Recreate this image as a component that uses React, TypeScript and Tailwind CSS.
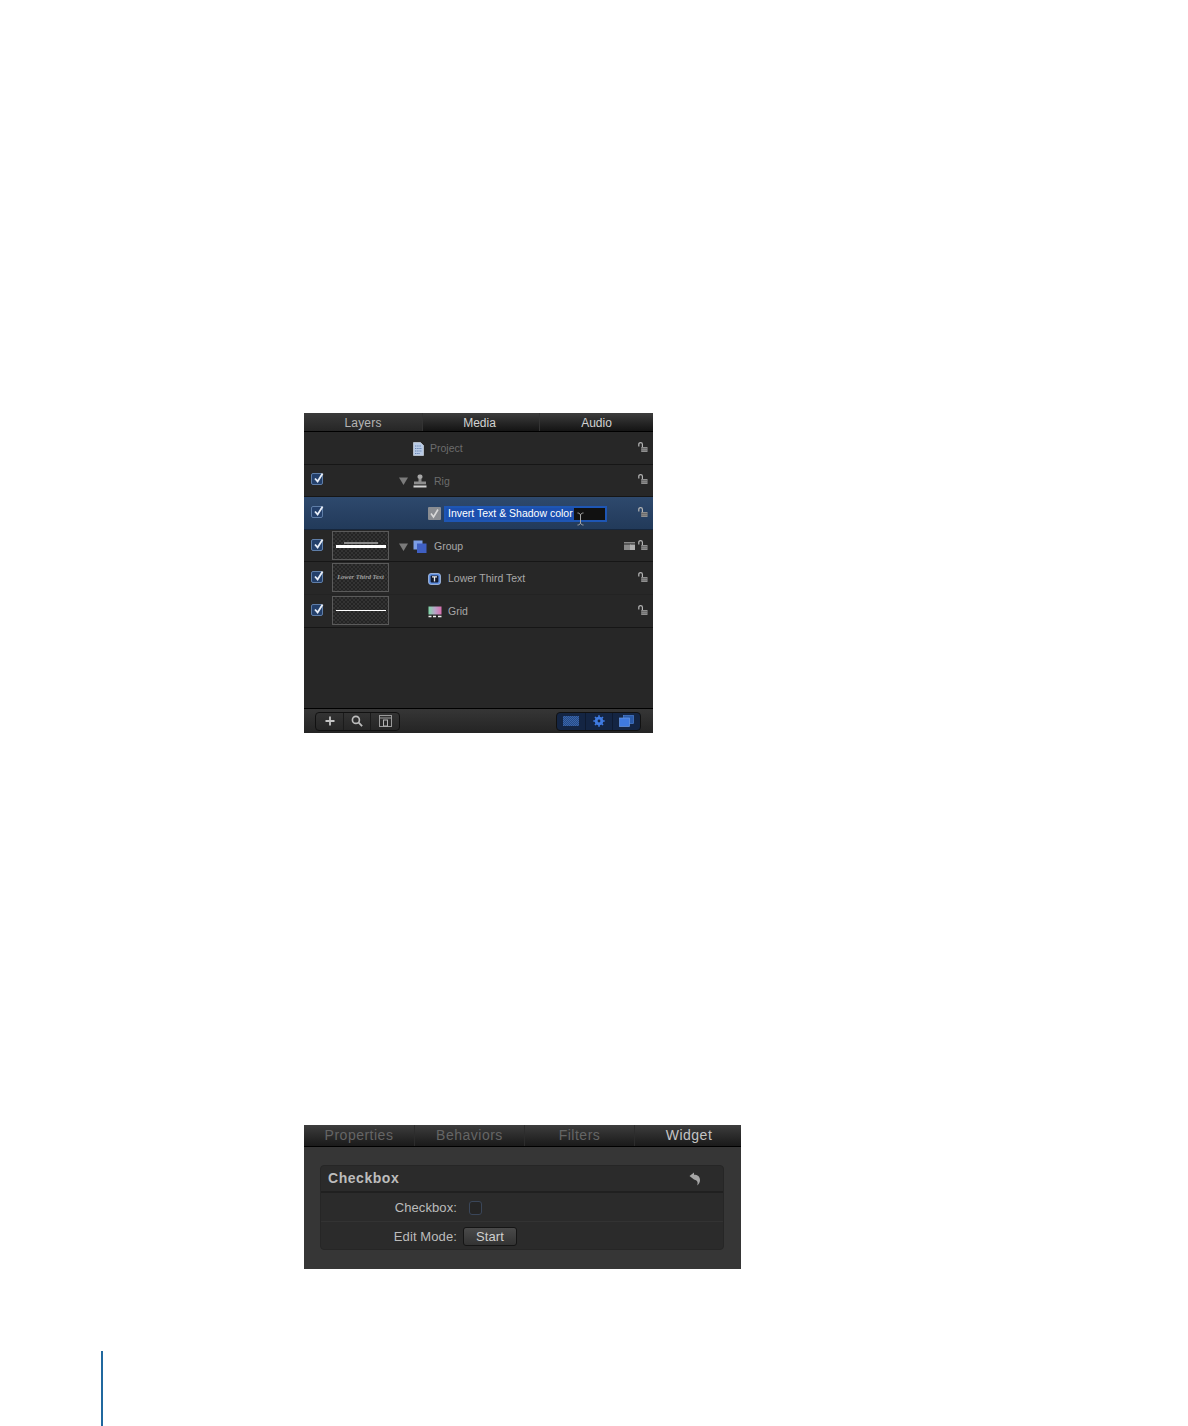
import React from 'react';

const font = { sans: 'font-["Liberation_Sans",Arial,sans-serif]' };

function Lock() {
  return (
    <svg width="10" height="11" viewBox="0 0 10 11" className="shrink-0 mb-[3px]">
      <path d="M0.8 4.5V2.2C0.8 1 1.5 0.6 2.6 0.6C3.7 0.6 4.4 1 4.4 2.2V5" fill="none" stroke="#b5b5b5" strokeWidth="1.2" />
      <rect x="3.2" y="5" width="6.3" height="5" fill="#8f8f8f" />
      <path d="M3.2 6.5H9.5M3.2 8.2H9.5" stroke="#5c5c5c" strokeWidth="0.7" />
    </svg>
  );
}

function Check() {
  return (
    <div className="relative w-[12px] h-[12px] mb-[4px] rounded-[2px] border border-[#5f7ea8] bg-[#24406b]">
      <svg width="14" height="14" viewBox="0 0 14 14" className="absolute left-[0px] top-[-3px]">
        <path d="M3 7.5L5.6 10.4L10.6 2.6" fill="none" stroke="#e8eef8" strokeWidth="1.8" />
      </svg>
    </div>
  );
}

function Triangle() {
  return (
    <svg width="9" height="8" viewBox="0 0 9 8" className="shrink-0">
      <path d="M0 0.5H9L4.5 8Z" fill="#7b7b7b" />
    </svg>
  );
}

function ProjectIcon() {
  return (
    <svg width="11" height="14" viewBox="0 0 11 14">
      <path d="M0.5 0.5H7.5L10.5 3.5V13.5H0.5Z" fill="#b9cbe6" stroke="#dfe6f0" strokeWidth="0.6" />
      <path d="M2 4H8M2 6.5H9M2 9H9M2 11.5H7" stroke="#5f7cab" strokeWidth="0.9" strokeDasharray="1.4 0.8" />
    </svg>
  );
}

function RigIcon() {
  return (
    <svg width="14" height="14" viewBox="0 0 14 14">
      <rect x="4.5" y="0.5" width="5" height="4.5" rx="2" fill="#a8a8a8" />
      <rect x="5.5" y="5" width="3" height="3" fill="#8d8d8d" />
      <rect x="1" y="7.5" width="12" height="3" fill="#8e8e8e" />
      <rect x="0.5" y="10.5" width="13" height="1" fill="#3a3a3a" />
      <rect x="0.5" y="11.5" width="13" height="2" fill="#d2d2d2" />
    </svg>
  );
}

function GroupIcon() {
  return (
    <svg width="14" height="13" viewBox="0 0 14 13">
      <rect x="0.5" y="0.5" width="9" height="9" fill="#7c9ee6" />
      <rect x="4" y="3.5" width="9.5" height="9.5" fill="#3f5fc2" />
    </svg>
  );
}

function TextIcon() {
  return (
    <svg width="13" height="12" viewBox="0 0 13 12">
      <rect x="0.5" y="0.5" width="12" height="11" rx="2.5" fill="#5f8fe0" stroke="#bcd0f2" strokeWidth="0.7" />
      <rect x="2.6" y="2.4" width="7.8" height="7.2" rx="1" fill="#10182c" />
      <path d="M4 3.8H9M6.5 3.8V8.4" stroke="#f0f0f0" strokeWidth="1.3" />
    </svg>
  );
}

function GridIcon() {
  return (
    <svg width="14" height="12" viewBox="0 0 14 12">
      <defs>
        <linearGradient id="gridFill" x1="0" y1="0" x2="1" y2="0">
          <stop offset="0" stopColor="#7fd8a8" />
          <stop offset="0.5" stopColor="#b9a3c8" />
          <stop offset="1" stopColor="#d86fb0" />
        </linearGradient>
      </defs>
      <rect x="0.5" y="0.5" width="13" height="8" fill="url(#gridFill)" />
      <path d="M0.5 10.5H3.5M5 10.5H8M10 10.5H13.5" stroke="#eeeeee" strokeWidth="1.6" />
    </svg>
  );
}

function RowThumb({ children }: { children?: React.ReactNode }) {
  return (
    <div className="w-[57px] h-[29px] mb-[3px] shrink-0 border border-[#5a5a5a] flex flex-col items-center justify-center bg-[repeating-conic-gradient(#333333_0_25%,#242424_0_50%)] bg-[length:4px_4px]">
      {children}
    </div>
  );
}

function LayerRow({
  checked,
  thumb,
  selected,
  extra,
  indent,
  faint,
  children,
}: {
  checked?: boolean;
  thumb?: React.ReactNode;
  selected?: boolean;
  extra?: React.ReactNode;
  indent: string;
  faint?: boolean;
  children: React.ReactNode;
}) {
  return (
    <div
      className={`flex items-center h-[32.6px] pt-[2px] pl-[7px] pr-[5px] border-b ${
        selected
          ? 'bg-gradient-to-b from-[#2e496d] to-[#223a5a] border-[#16263c]'
          : faint
            ? 'border-[#232323]'
            : 'border-[#161616]'
      }`}
    >
      <div className="w-[21px] shrink-0 flex justify-start">{checked && <Check />}</div>
      <div className="w-[57px] shrink-0">{thumb}</div>
      <div className={`flex items-center flex-1 min-w-0 ${indent}`}>{children}</div>
      {extra}
      <Lock />
    </div>
  );
}

export default function App() {
  return (
    <div className={`relative min-h-[1426px] bg-white overflow-hidden ${font.sans}`}>
      {/* Layers panel */}
      <div className="ml-[304px] pt-[413px] w-[349px]">
        <div className="bg-[#272727] h-[320px] flex flex-col">
          <div className="flex h-[19px] border-b border-black text-[12px] leading-[20px] text-center">
            <div className="w-[118px] bg-gradient-to-b from-[#3a3a3a] to-[#262626] text-[#b4b4b4] tracking-[0.2px]">Layers</div>
            <div className="w-[117px] pr-[3px] border-l border-[#333] bg-gradient-to-b from-[#3d3d3d] to-[#141414] text-[#d2d2d2]">Media</div>
            <div className="flex-1 border-l border-[#333] bg-gradient-to-b from-[#3d3d3d] to-[#141414] text-[#d2d2d2]">Audio</div>
          </div>

          <div className="text-[10.5px] text-[#d0d0d0]">
            <LayerRow indent="pl-[24px]">
              <ProjectIcon />
              <span className="ml-[6px] text-[#6c6c6c]">Project</span>
            </LayerRow>
            <LayerRow checked indent="pl-[10px]">
              <Triangle />
              <span className="ml-[5px]"><RigIcon /></span>
              <span className="ml-[7px] text-[#6c6c6c]">Rig</span>
            </LayerRow>
            <LayerRow checked selected indent="pl-[39px]">
              <div className="w-[13px] h-[13px] shrink-0 bg-[#8a8d92] rounded-[1px] flex items-center justify-center">
                <svg width="11" height="11" viewBox="0 0 11 11">
                  <path d="M2 5.5L4.5 9L9 1.5" fill="none" stroke="#d8d8d8" strokeWidth="1.6" />
                </svg>
              </div>
              <div className="relative ml-[3px] w-[163px] h-[16px] border-2 border-[#1e56b4] bg-[#111] leading-[11px]">
                <span className="inline-block h-full pl-[2px] pr-[1px] bg-[#1c4fae] text-white">Invert Text &amp; Shadow color</span>
                <svg width="9" height="16" viewBox="0 0 9 14" className="absolute left-[130px] top-[3px]">
                  <path d="M1.5 1C3 1 4 1.5 4.5 3V11C4 12.5 3 13 1.5 13M7.5 1C6 1 5 1.5 4.5 3M4.5 11C5 12.5 6 13 7.5 13" fill="none" stroke="#a8a8a8" strokeWidth="1" />
                </svg>
              </div>
            </LayerRow>
            <LayerRow
              checked
              indent="pl-[10px]"
              thumb={
                <RowThumb>
                  <div className="w-[34px] h-[2px] mb-[1px] bg-[#8a8a8a]" />
                  <div className="w-[50px] h-[3px] bg-white" />
                </RowThumb>
              }
              extra={
                <svg width="11" height="8" viewBox="0 0 11 8" className="mr-[3px] mb-[2px] shrink-0">
                  <rect x="0" y="0" width="11" height="1.5" fill="#8a8a8a" />
                  <rect x="0" y="2.5" width="7" height="5.5" fill="#8a8a8a" />
                  <rect x="6" y="2.5" width="5" height="5.5" fill="#b0b0b0" />
                </svg>
              }
            >
              <Triangle />
              <span className="ml-[5px]"><GroupIcon /></span>
              <span className="ml-[7px] text-[#a8a8a8]">Group</span>
            </LayerRow>
            <LayerRow
              checked
              indent="pl-[39px]"
              faint
              thumb={
                <RowThumb>
                  <span className="font-['Liberation_Serif',serif] italic font-bold text-[6.5px] leading-none text-[#a0a0a0] whitespace-nowrap">
                    Lower Third Text
                  </span>
                </RowThumb>
              }
            >
              <TextIcon />
              <span className="ml-[7px] text-[#a8a8a8]">Lower Third Text</span>
            </LayerRow>
            <LayerRow
              checked
              indent="pl-[39px]"
              thumb={
                <RowThumb>
                  <div className="w-[50px] h-[1.5px] bg-white" />
                </RowThumb>
              }
            >
              <GridIcon />
              <span className="ml-[6px] text-[#a8a8a8]">Grid</span>
            </LayerRow>
          </div>

          <div className="flex-1" />

          {/* Bottom toolbar */}
          <div className="h-[25px] border-t border-black bg-gradient-to-b from-[#363636] to-[#242424] flex items-center justify-between pl-[11px] pr-[12px]">
            <div className="flex h-[19px] w-[85px] rounded-[4px] border border-[#111] bg-gradient-to-b from-[#333] to-[#262626]">
              <div className="w-[28px] flex items-center justify-center border-r border-[#1b1b1b]">
                <svg width="10" height="10" viewBox="0 0 10 10">
                  <path d="M5 0.5V9.5M0.5 5H9.5" stroke="#c4c4c4" strokeWidth="1.8" />
                </svg>
              </div>
              <div className="w-[27px] flex items-center justify-center border-r border-[#1b1b1b]">
                <svg width="12" height="12" viewBox="0 0 11 11">
                  <circle cx="4.5" cy="4.5" r="3.2" fill="none" stroke="#bcbcbc" strokeWidth="1.5" />
                  <path d="M7 7L10.2 10.2" stroke="#bcbcbc" strokeWidth="1.7" />
                </svg>
              </div>
              <div className="flex-1 flex items-center justify-center">
                <svg width="13" height="12" viewBox="0 0 13 12">
                  <rect x="0.5" y="0.5" width="12" height="11" fill="none" stroke="#9a9a9a" />
                  <path d="M0.5 3H12.5" stroke="#9a9a9a" />
                  <rect x="4.5" y="5" width="4" height="6" fill="none" stroke="#b5b5b5" />
                </svg>
              </div>
            </div>
            <div className="flex h-[19px] w-[85px] rounded-[4px] border border-[#111] bg-[#142543]">
              <div className="w-[29px] flex items-center justify-center border-r border-[#0e1a30]">
                <div className="w-[16px] h-[10px] bg-[repeating-conic-gradient(#3a64a8_0_25%,#254a85_0_50%)] bg-[length:2px_2px]" />
              </div>
              <div className="w-[27px] flex items-center justify-center border-r border-[#0e1a30]">
                <svg width="12" height="12" viewBox="0 0 12 12">
                  <circle cx="6" cy="6" r="3" fill="#3f7ae0" stroke="#3f7ae0" strokeWidth="2.6" />
                  <circle cx="6" cy="6" r="1.4" fill="#142543" />
                  <path d="M6 0.3V2.4M6 9.6V11.7M0.3 6H2.4M9.6 6H11.7M2 2L3.4 3.4M8.6 8.6L10 10M2 10L3.4 8.6M8.6 3.4L10 2" stroke="#3f7ae0" strokeWidth="1.6" />
                </svg>
              </div>
              <div className="flex-1 flex items-center justify-center">
                <svg width="15" height="12" viewBox="0 0 15 12">
                  <rect x="4.5" y="0.5" width="10" height="8" fill="#2a5aa8" stroke="#4b7fd0" strokeWidth="0.7" />
                  <rect x="0.5" y="3" width="10" height="8.5" fill="#3f7ae0" stroke="#6c9be6" strokeWidth="0.7" />
                </svg>
              </div>
            </div>
          </div>
        </div>
      </div>

      {/* Widget inspector */}
      <div className="ml-[304px] mt-[392px] w-[437px] h-[144px] bg-[#363636] flex flex-col">
        <div className="flex h-[22px] border-b border-black text-[14px] tracking-[0.5px] leading-[21px] text-center bg-gradient-to-b from-[#3d3d3d] to-[#1a1a1a]">
          <div className="w-[110px] text-[#656565]">Properties</div>
          <div className="w-[110px] border-l border-[#2c2c2c] text-[#656565]">Behaviors</div>
          <div className="w-[110px] border-l border-[#2c2c2c] text-[#656565]">Filters</div>
          <div className="flex-1 border-l border-[#2c2c2c] text-[#c4c4c4] pl-[2px]">Widget</div>
        </div>
        <div className="ml-[16px] mr-[17px] mt-[18px] h-[85px] rounded-[4px] border border-[#262626] bg-[#2b2b2b] flex flex-col">
          <div className="h-[27px] flex items-center justify-between pl-[7px] pr-[22px] border-b-2 border-[#202020]">
            <span className="text-[14px] font-bold tracking-[0.55px] text-[#bdbdbd]">Checkbox</span>
            <svg width="12" height="14" viewBox="0 0 12 14">
              <path d="M0.5 4L5 0.5V2.8C8.5 2.8 11 4.6 11 8C11 10.5 9.8 12.3 8 13.5C9 11.5 9.2 8.2 5 7.4V7.5Z" fill="#a6a6a6" />
            </svg>
          </div>
          <div className="h-[29px] pt-[2px] flex items-center border-b border-[#333] text-[13px] tracking-[0.1px] text-[#bcbcbc]">
            <span className="w-[136px] text-right">Checkbox:</span>
            <div className="ml-[12px] w-[13px] h-[14px] rounded-[3px] border border-[#3a4659] bg-[#252525]" />
          </div>
          <div className="flex-1 pt-[2px] flex items-center text-[13px] tracking-[0.1px] text-[#bcbcbc]">
            <span className="w-[136px] text-right">Edit Mode:</span>
            <div className="ml-[6px] w-[54px] h-[19px] rounded-[3px] border border-[#151515] bg-gradient-to-b from-[#4a4a4a] to-[#333] text-center leading-[17px] text-[#cfcfcf]">
              Start
            </div>
          </div>
        </div>
      </div>

      {/* Change bar */}
      <div className="absolute left-[101px] top-[1351px] bottom-0 w-[2px] bg-[#20689e]" />
    </div>
  );
}
